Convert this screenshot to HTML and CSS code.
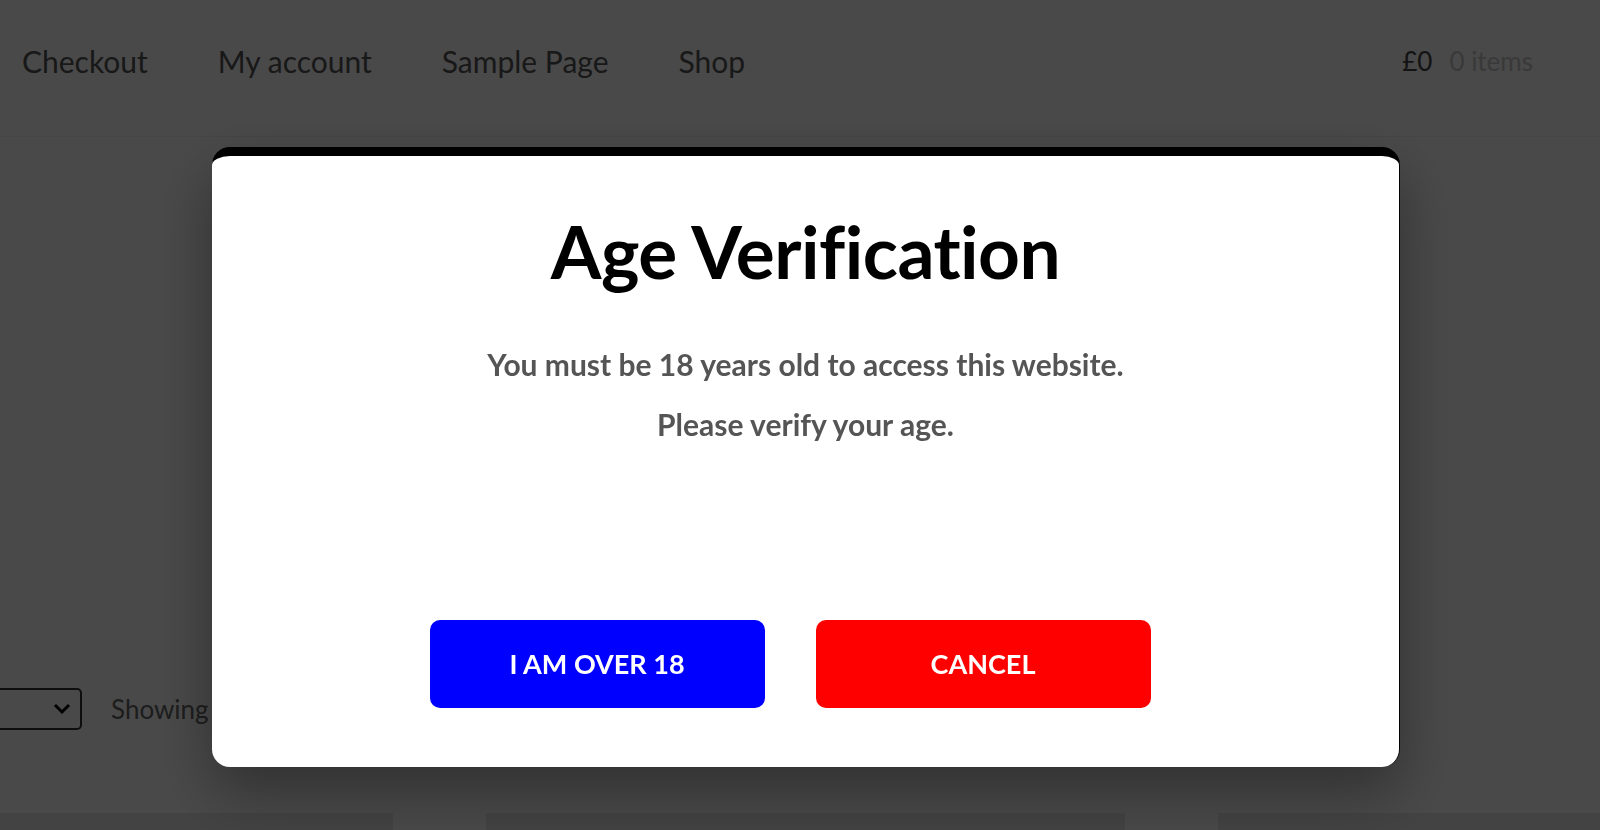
FILE: index.html
```html
<!DOCTYPE html>
<html lang="en">
<head>
    <meta charset="UTF-8">
    <meta name="viewport" content="width=device-width, initial-scale=1.0">
    <title>Shop - Age Verification</title>
<link rel="stylesheet" href="styles.css">
</head>
<body>
    <header class="site-header">
        <nav class="main-nav">
            <a href="#">Checkout</a>
            <a href="#">My account</a>
            <a href="#">Sample Page</a>
            <a href="#">Shop</a>
        </nav>
        <div class="cart">
            <span class="cart-total">&pound;0</span>
            <span class="cart-count">0 items</span>
        </div>
    </header>

    <main class="shop">
        <div class="shop-toolbar">
            <div class="orderby">
                <svg width="18" height="12" viewBox="0 0 18 12"><path d="M2 2l7 7 7-7" fill="none" stroke="#000" stroke-width="3"/></svg>
            </div>
            <p class="result-count">Showing all 9 results</p>
        </div>
        <div class="products">
            <div class="product"></div>
            <div class="product"></div>
            <div class="product"></div>
        </div>
    </main>

    <div class="age-overlay">
        <div class="age-modal">
            <h1 class="age-title">Age Verification</h1>
            <p class="age-text">You must be 18 years old to access this website.</p>
            <p class="age-text">Please verify your age.</p>
            <div class="age-actions">
                <button class="btn btn-yes">I AM OVER 18</button>
                <button class="btn btn-no">CANCEL</button>
            </div>
        </div>
    </div>
</body>
</html>
```

FILE: styles.css
```css
/* Global */
* {
    margin: 0;
    padding: 0;
    box-sizing: border-box;
}

body {
    font-family: Lato, "Liberation Sans", sans-serif;
    background: #ffffff;
    color: #4a4a4a;
    height: 830px;
    overflow: hidden;
}

a {
    color: inherit;
    text-decoration: none;
}

/* Header */
.site-header {
    height: 137px;
    display: flex;
    align-items: center;
    justify-content: space-between;
    padding: 0 67px 14px 22px;
    border-bottom: 1px solid #f0f0f0;
}

.main-nav {
    display: flex;
    gap: 70px;
    font-size: 30px;
    color: #555;
}

.cart {
    display: flex;
    gap: 17px;
    font-size: 26px;
}

.cart-total {
    color: #444;
}

.cart-count {
    color: #c8c8c8;
}

/* Shop content */
.shop {
    padding-top: 551px;
}

.shop-toolbar {
    display: flex;
    align-items: center;
    gap: 29px;
}

.orderby {
    width: 82px;
    height: 42px;
    border: 2px solid #333;
    border-left: none;
    border-radius: 0 5px 5px 0;
    display: flex;
    align-items: center;
    justify-content: flex-end;
    padding-right: 9px;
}

.result-count {
    font-size: 26px;
    color: #666;
}

.products {
    display: grid;
    grid-template-columns: 393px 639px 382px;
    justify-content: space-between;
    margin-top: 83px;
}

.product {
    height: 40px;
    background: #e9e9e9;
}

/* Age verification popup */
.age-overlay {
    position: fixed;
    inset: 0;
    background: rgba(0, 0, 0, 0.713);
    display: flex;
    justify-content: center;
    align-items: flex-start;
    padding: 147px 0 0 12px;
}

.age-modal {
    width: 1188px;
    height: 620px;
    background: #fff;
    border-top: 9px solid #000;
    border-right: 1px solid #000;
    border-radius: 18px;
    box-shadow: 0 25px 60px rgba(0, 0, 0, 0.35);
    text-align: center;
    padding-top: 52px;
}

.age-title {
    font-size: 73px;
    font-weight: 700;
    color: #000;
    line-height: 1.2;
    letter-spacing: -0.5px;
    margin-bottom: 38px;
}

.age-text {
    font-size: 30px;
    font-weight: 700;
    color: #555;
    line-height: 60px;
}

.age-actions {
    display: flex;
    justify-content: center;
    gap: 51px;
    padding-right: 31px;
    margin-top: 166px;
}

.btn {
    width: 335px;
    height: 88px;
    border: none;
    border-radius: 10px;
    color: #fff;
    font-family: inherit;
    font-size: 27px;
    font-weight: 700;
    cursor: pointer;
}

.btn-yes {
    background: #0000ff;
}

.btn-no {
    background: #ff0000;
}
```
